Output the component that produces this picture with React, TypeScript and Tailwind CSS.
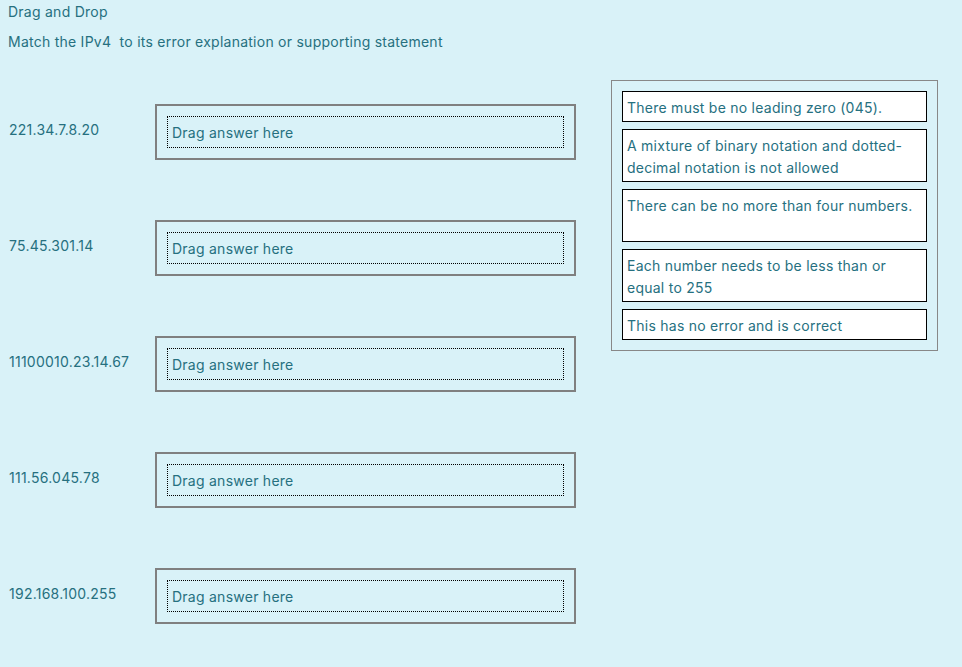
const ips = [
  "221.34.7.8.20",
  "75.45.301.14",
  "11100010.23.14.67",
  "111.56.045.78",
  "192.168.100.255",
];

const answers = [
  { text: "There must be no leading zero (045).", tall: false },
  { text: "A mixture of binary notation and dotted-decimal notation is not allowed", tall: true },
  { text: "There can be no more than four numbers.", tall: true },
  { text: "Each number needs to be less than or equal to 255", tall: true },
  { text: "This has no error and is correct", tall: false },
];

export default function App() {
  return (
    <div
      className="min-h-screen bg-[#d9f2f8] text-[#26707f] text-[14px] tracking-[0.25px]"
      style={{ fontFamily: "Inter, 'Open Sans', sans-serif" }}
    >
      {/* Header */}
      <div className="px-[8px] pt-[2px]">
        <p className="leading-[20px]">Drag and Drop</p>
        <p className="mt-[10px] leading-[20px]">
          Match the IPv4&nbsp; to its error explanation or supporting statement
        </p>
      </div>

      <div className="mt-[28px] flex items-start">
        {/* Questions */}
        <div className="flex flex-col gap-[60px] pt-[24px] pl-[9px]">
          {ips.map((ip) => (
            <div key={ip} className="flex items-center">
              <div className="w-[146px] -mt-[4px] leading-[20px]">{ip}</div>
              <div className="h-[56px] w-[421px] border-2 border-[#808080] p-[10px]">
                <div className="flex h-[32px] items-center border border-dotted border-black pl-[4px]">
                  Drag answer here
                </div>
              </div>
            </div>
          ))}
        </div>

        {/* Answers */}
        <div className="ml-[35px] flex w-[327px] flex-col gap-[7px] border border-[#888888] p-[10px]">
          {answers.map((a) => (
            <div
              key={a.text}
              className={`border border-black bg-white px-[4px] pt-[5px] pb-[2px] leading-[22px] ${
                a.tall ? "min-h-[53px]" : "min-h-[31px]"
              }`}
            >
              {a.text}
            </div>
          ))}
        </div>
      </div>
    </div>
  );
}
